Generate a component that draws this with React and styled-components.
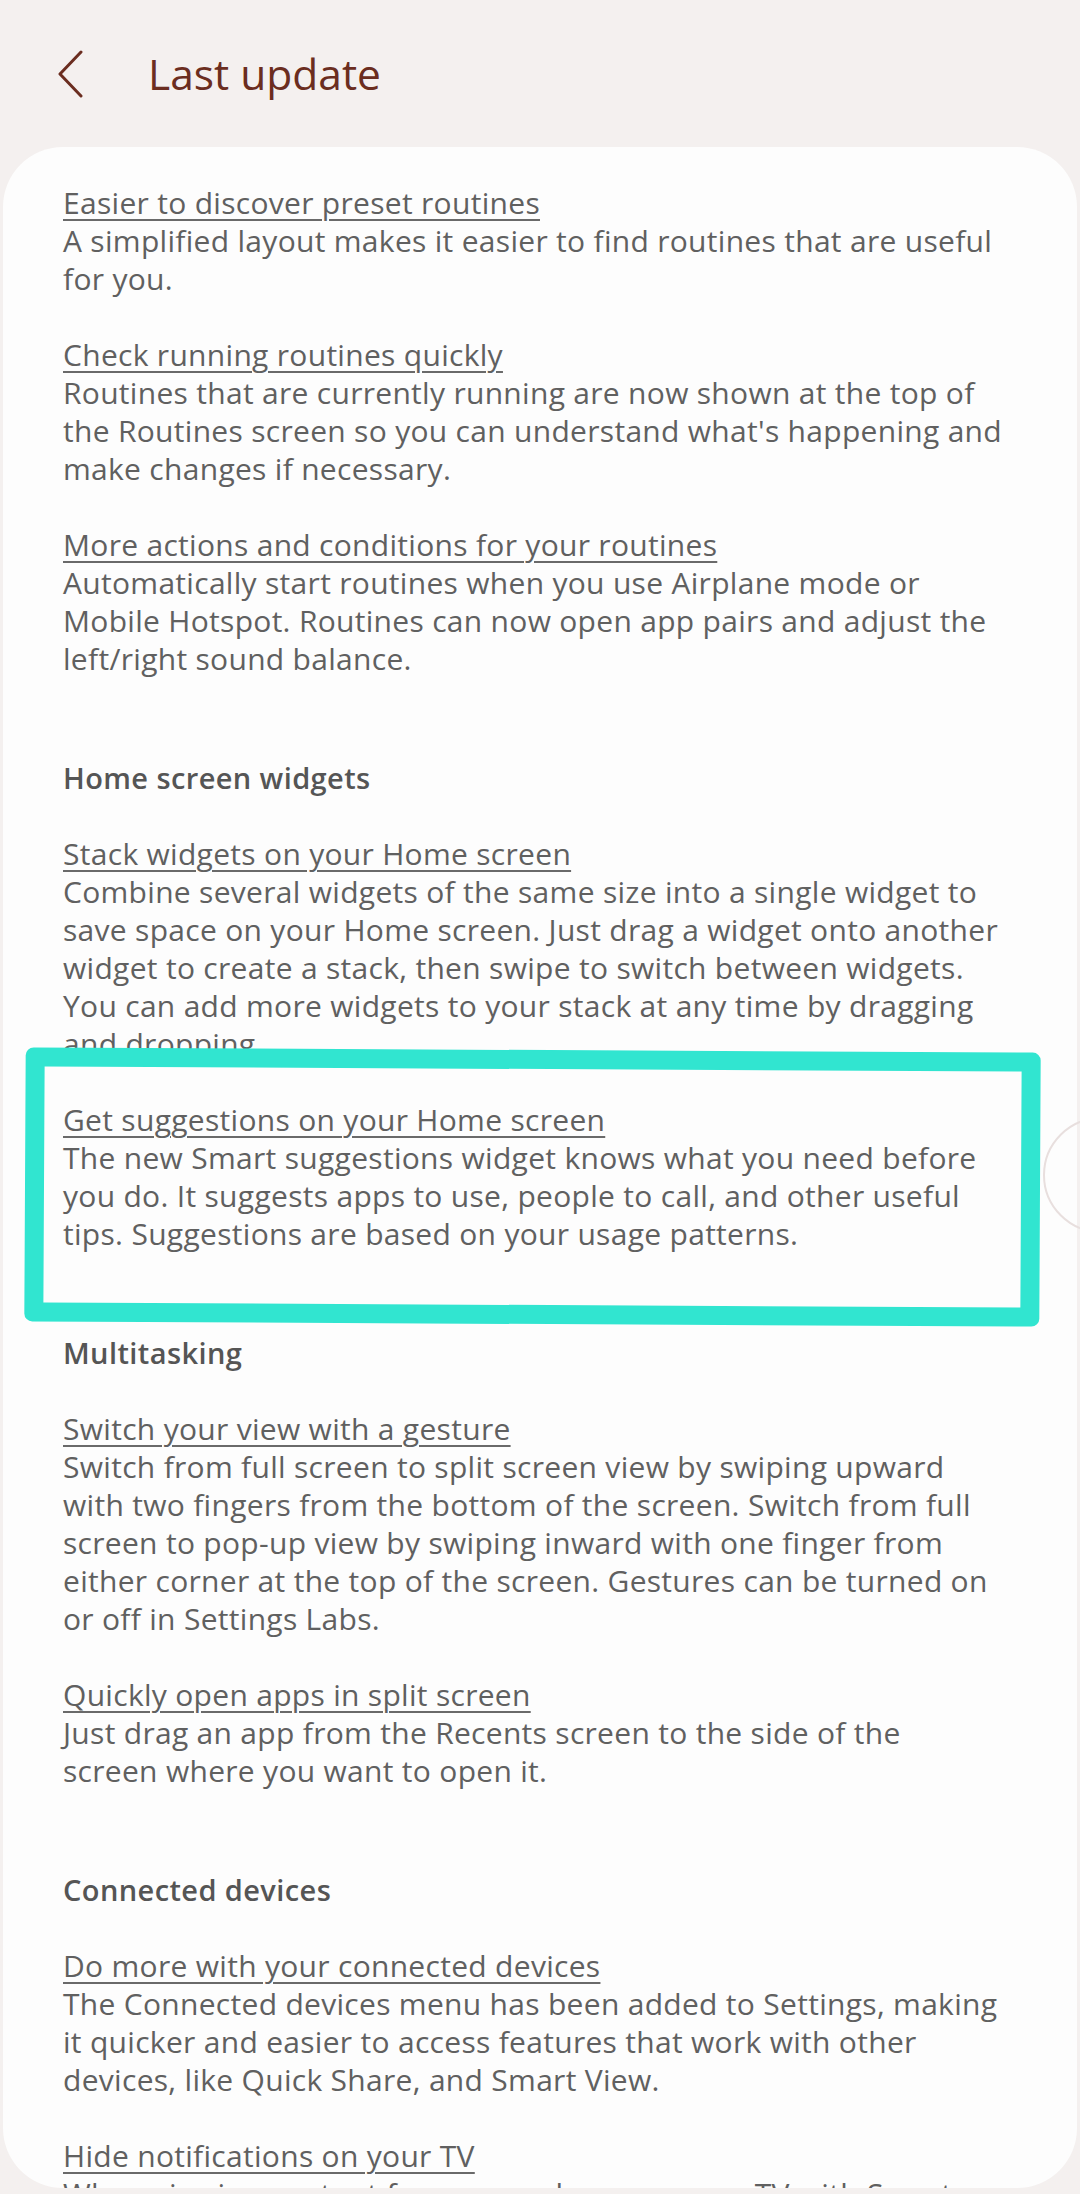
import styled, { createGlobalStyle } from "styled-components";

const GlobalStyle = createGlobalStyle`
  body {
    margin: 0;
    background: #f4f0ef;
    font-family: "Open Sans", Roboto, "Liberation Sans", sans-serif;
  }
`;

const sections = [
  {
    heading: null,
    items: [
      {
        title: "Easier to discover preset routines",
        lines: [
          "A simplified layout makes it easier to find routines that are useful",
          "for you.",
        ],
      },
      {
        title: "Check running routines quickly",
        lines: [
          "Routines that are currently running are now shown at the top of",
          "the Routines screen so you can understand what's happening and",
          "make changes if necessary.",
        ],
      },
      {
        title: "More actions and conditions for your routines",
        lines: [
          "Automatically start routines when you use Airplane mode or",
          "Mobile Hotspot. Routines can now open app pairs and adjust the",
          "left/right sound balance.",
        ],
      },
    ],
  },
  {
    heading: "Home screen widgets",
    items: [
      {
        title: "Stack widgets on your Home screen",
        lines: [
          "Combine several widgets of the same size into a single widget to",
          "save space on your Home screen. Just drag a widget onto another",
          "widget to create a stack, then swipe to switch between widgets.",
          "You can add more widgets to your stack at any time by dragging",
          "and dropping.",
        ],
      },
      {
        title: "Get suggestions on your Home screen",
        lines: [
          "The new Smart suggestions widget knows what you need before",
          "you do. It suggests apps to use, people to call, and other useful",
          "tips. Suggestions are based on your usage patterns.",
        ],
      },
    ],
  },
  {
    heading: "Multitasking",
    items: [
      {
        title: "Switch your view with a gesture",
        lines: [
          "Switch from full screen to split screen view by swiping upward",
          "with two fingers from the bottom of the screen. Switch from full",
          "screen to pop-up view by swiping inward with one finger from",
          "either corner at the top of the screen. Gestures can be turned on",
          "or off in Settings Labs.",
        ],
      },
      {
        title: "Quickly open apps in split screen",
        lines: [
          "Just drag an app from the Recents screen to the side of the",
          "screen where you want to open it.",
        ],
      },
    ],
  },
  {
    heading: "Connected devices",
    items: [
      {
        title: "Do more with your connected devices",
        lines: [
          "The Connected devices menu has been added to Settings, making",
          "it quicker and easier to access features that work with other",
          "devices, like Quick Share, and Smart View.",
        ],
      },
      {
        title: "Hide notifications on your TV",
        lines: [
          "When viewing content from your phone on your TV with Smart",
          "View, you can hide notifications so they don't interrupt you.",
        ],
      },
    ],
  },
];

const BackIcon = () => (
  <svg width="28" height="48" viewBox="0 0 28 48" fill="none">
    <path
      d="M25 2 L4 24 L25 46"
      stroke="#6b2d20"
      strokeWidth="3"
      strokeLinecap="round"
      strokeLinejoin="round"
    />
  </svg>
);

export default function App() {
  return (
    <>
      <GlobalStyle />
      <Screen>
        <Header>
          <BackButton>
            <BackIcon />
          </BackButton>
          <Title>Last update</Title>
        </Header>
        <Card>
          <Content>
            {sections.map((section, si) => (
              <Section key={si} $first={si === 0}>
                {section.heading && <Heading>{section.heading}</Heading>}
                {section.items.map((item) => (
                  <Item key={item.title}>
                    <ItemTitle>{item.title}</ItemTitle>
                    {item.lines.map((line) => (
                      <Line key={line}>{line}</Line>
                    ))}
                  </Item>
                ))}
              </Section>
            ))}
          </Content>
        </Card>
        <Highlight />
        <EdgeHandle />
      </Screen>
    </>
  );
}

const Screen = styled.div`
  position: relative;
  height: 2194px;
  overflow: hidden;
  display: flex;
  flex-direction: column;
`;

const Header = styled.div`
  height: 147px;
  flex-shrink: 0;
  display: flex;
  align-items: center;
  padding-left: 56px;
`;

const BackButton = styled.div`
  display: flex;
  align-items: center;
  width: 28px;
  margin-right: 64px;
`;

const Title = styled.h1`
  margin: 0;
  font-size: 42.5px;
  font-weight: 400;
  color: #6b2d20;
`;

const Card = styled.div`
  height: 2041px;
  flex-shrink: 0;
  margin: 0 3px;
  background: #fdfdfd;
  border-radius: 60px;
  overflow: hidden;
  padding: 37px 10px 0 60px;
  box-sizing: border-box;
`;

const Content = styled.div`
  display: flex;
  flex-direction: column;
`;

const Section = styled.div`
  display: flex;
  flex-direction: column;
  gap: 38px;
  margin-top: ${(p) => (p.$first ? "0" : "81px")};
`;

const Heading = styled.div`
  font-size: 29px;
  line-height: 38px;
  font-weight: 600;
  color: #555555;
  letter-spacing: 0.4px;
`;

const Item = styled.div`
  display: flex;
  flex-direction: column;
  font-size: 30px;
  line-height: 38px;
  color: #606060;
  white-space: nowrap;
  letter-spacing: 0.3px;
`;

const ItemTitle = styled.div`
  align-self: flex-start;
  text-decoration: underline;
  text-decoration-thickness: 2px;
  text-underline-offset: 5px;
  text-decoration-color: #6a6a6a;
`;

const Line = styled.div``;

const Highlight = styled.div`
  position: absolute;
  left: 25px;
  top: 1050px;
  width: 1015px;
  height: 274px;
  box-sizing: border-box;
  border: 19px solid #31e5d0;
  border-radius: 8px;
  transform: rotate(0.3deg);
  pointer-events: none;
`;

const EdgeHandle = styled.div`
  position: absolute;
  left: 1043px;
  top: 1117px;
  width: 116px;
  height: 116px;
  box-sizing: border-box;
  border: 2px solid #e8dfde;
  border-radius: 50%;
`;
